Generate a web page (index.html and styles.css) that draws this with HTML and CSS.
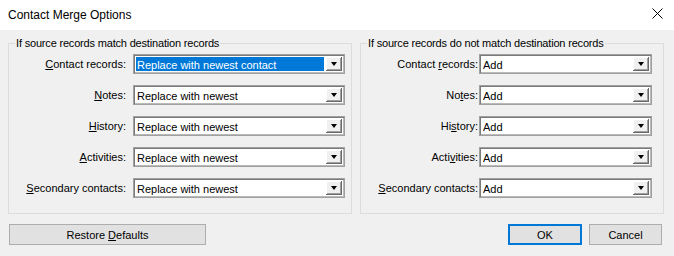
FILE: index.html
```html
<!DOCTYPE html>
<html>
<head>
<meta charset="utf-8">
<link rel="stylesheet" href="styles.css">
</head>
<body>
<div class="window">
  <div class="titlebar">
    <span class="title">Contact Merge Options</span>
    <svg class="close" width="12" height="12" viewBox="0 0 12 12"><path d="M0.5 0.5 L10.5 10.5 M10.5 0.5 L0.5 10.5" stroke="#000" stroke-width="1" fill="none"/></svg>
  </div>
  <div class="groups">
    <fieldset class="group left">
      <legend>If source records match destination records</legend>
      <div class="rows">
        <label><u>C</u>ontact records:</label>
        <div class="combo"><div class="value selected">Replace with newest contact</div><div class="drop"><span class="arrow"></span></div></div>
        <label><u>N</u>otes:</label>
        <div class="combo"><div class="value">Replace with newest</div><div class="drop"><span class="arrow"></span></div></div>
        <label><u>H</u>istory:</label>
        <div class="combo"><div class="value">Replace with newest</div><div class="drop"><span class="arrow"></span></div></div>
        <label><u>A</u>ctivities:</label>
        <div class="combo"><div class="value">Replace with newest</div><div class="drop"><span class="arrow"></span></div></div>
        <label><u>S</u>econdary contacts:</label>
        <div class="combo"><div class="value">Replace with newest</div><div class="drop"><span class="arrow"></span></div></div>
      </div>
    </fieldset>
    <fieldset class="group right">
      <legend>If source records do not match destination records</legend>
      <div class="rows">
        <label>Contact <u>r</u>ecords:</label>
        <div class="combo"><div class="value">Add</div><div class="drop"><span class="arrow"></span></div></div>
        <label>No<u>t</u>es:</label>
        <div class="combo"><div class="value">Add</div><div class="drop"><span class="arrow"></span></div></div>
        <label>Hi<u>s</u>tory:</label>
        <div class="combo"><div class="value">Add</div><div class="drop"><span class="arrow"></span></div></div>
        <label>Acti<u>v</u>ities:</label>
        <div class="combo"><div class="value">Add</div><div class="drop"><span class="arrow"></span></div></div>
        <label><u>S</u>econdary contacts:</label>
        <div class="combo"><div class="value">Add</div><div class="drop"><span class="arrow"></span></div></div>
      </div>
    </fieldset>
  </div>
  <div class="footer">
    <button class="btn restore">Restore <u>D</u>efaults</button>
    <div class="actions">
      <button class="btn ok">OK</button>
      <button class="btn">Cancel</button>
    </div>
  </div>
</div>
</body>
</html>
```
FILE: styles.css
```css
html, body {
  margin: 0;
  padding: 0;
}
body {
  width: 674px;
  height: 256px;
  overflow: hidden;
  background: #f0f0f0;
  font-family: "Liberation Sans", Arial, sans-serif;
  font-size: 11px;
  color: #000;
}
.window {
  width: 674px;
  height: 256px;
  display: flex;
  flex-direction: column;
}
.titlebar {
  height: 30px;
  flex: none;
  background: #fff;
  display: flex;
  align-items: center;
  justify-content: space-between;
  padding: 0 10px 0 8px;
  box-sizing: border-box;
}
.title {
  font-size: 12px;
  margin-top: -1px;
}
.close {
  display: block;
  margin-top: -2px;
}
.groups {
  display: grid;
  grid-template-columns: 344px 304px;
  column-gap: 8px;
  padding: 7px 0 0 8px;
}
.group {
  margin: 0;
  border: 1px solid #dcdcdc;
  padding: 4px 6px 15px 0;
  min-width: 0;
}
.group legend {
  margin-left: 6px;
  padding: 0 1px;
  line-height: 13px;
  font-size: 11px;
  letter-spacing: -0.18px;
}
.rows {
  display: grid;
  grid-template-columns: 1fr 212px;
  column-gap: 7px;
  row-gap: 11px;
  align-items: center;
}
.group.right {
  padding-right: 11px;
}
.group.right .rows {
  grid-template-columns: 1fr 173px;
  column-gap: 1px;
}
.rows label {
  text-align: right;
  white-space: nowrap;
  line-height: 13px;
}
.combo {
  height: 20px;
  box-sizing: border-box;
  border: 1px solid #a0a0a0;
  box-shadow: inset 1px 1px 0 #7a7a7a, inset -1px -1px 0 #b9b9b9;
  background: #fff;
  display: flex;
  padding: 2px;
}
.value {
  flex: 1;
  line-height: 16px;
  padding-left: 1px;
  white-space: nowrap;
  overflow: hidden;
}
.value.selected {
  background: #0078d7;
  color: #fff;
  margin-right: 2px;
}
.drop {
  width: 16px;
  flex: none;
  box-sizing: border-box;
  background: #f0f0f0;
  border-right: 1px solid #696969;
  border-bottom: 1px solid #696969;
  box-shadow: inset 1px 1px 0 #fff, inset -1px -1px 0 #a0a0a0;
  display: flex;
  align-items: center;
  justify-content: center;
}
.arrow {
  width: 0;
  height: 0;
  border-left: 3.5px solid transparent;
  border-right: 3.5px solid transparent;
  border-top: 4px solid #000;
  margin-top: 1px;
}
.footer {
  display: flex;
  justify-content: space-between;
  align-items: flex-start;
  padding: 10px 12px 0 9px;
}
.actions {
  display: flex;
  gap: 7px;
}
.btn {
  font-family: "Liberation Sans", Arial, sans-serif;
  font-size: 11px;
  color: #000;
  height: 21px;
  width: 73px;
  box-sizing: border-box;
  background: #e1e1e1;
  border: 1px solid #adadad;
  padding: 0;
  margin: 0;
}
.btn.restore {
  width: 197px;
}
.btn.ok {
  width: 74px;
  border: 2px solid #0078d7;
}
```
